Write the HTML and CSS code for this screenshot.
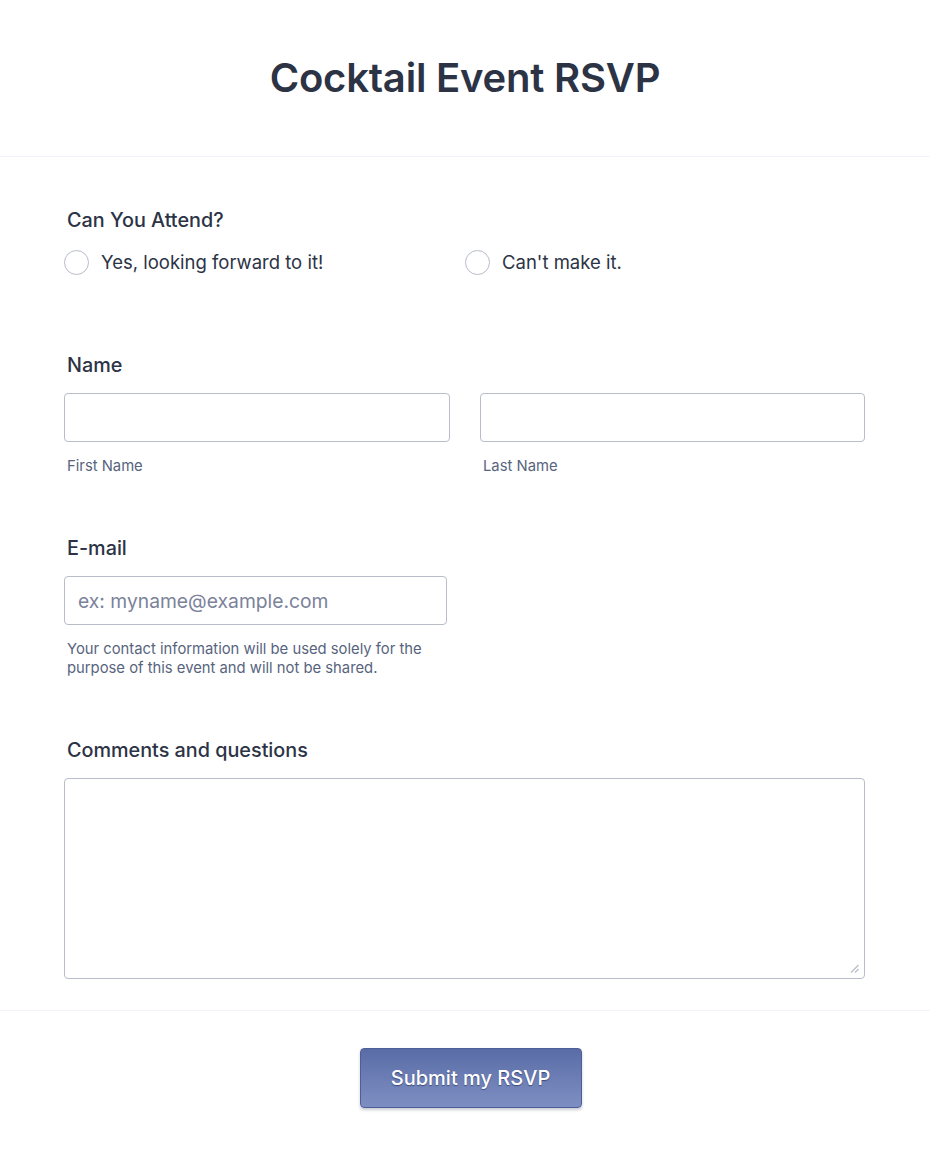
FILE: index.html
```html
<!DOCTYPE html>
<html lang="en">
<head>
<meta charset="utf-8">
<title>Cocktail Event RSVP</title>
<link rel="stylesheet" href="styles.css">
</head>
<body>
<form class="card">
  <header class="card-header">
    <h1 class="title">Cocktail Event RSVP</h1>
  </header>

  <div class="fields">
    <fieldset class="field field-attend">
      <legend class="label">Can You Attend?</legend>
      <div class="radio-row">
        <label class="radio"><input type="radio" name="attend" class="radio-input"><span class="radio-text">Yes, looking forward to it!</span></label>
        <label class="radio"><input type="radio" name="attend" class="radio-input"><span class="radio-text">Can't make it.</span></label>
      </div>
    </fieldset>

    <div class="field field-name">
      <div class="label">Name</div>
      <div class="name-row">
        <label class="name-part">
          <input type="text" class="text-input">
          <span class="sublabel">First Name</span>
        </label>
        <label class="name-part">
          <input type="text" class="text-input">
          <span class="sublabel">Last Name</span>
        </label>
      </div>
    </div>

    <div class="field field-email">
      <label class="label" for="email">E-mail</label>
      <input id="email" type="email" class="text-input email-input" placeholder="ex: myname@example.com">
      <p class="hint">Your contact information will be used solely for the purpose of this event and will not be shared.</p>
    </div>

    <div class="field field-comments">
      <label class="label" for="comments">Comments and questions</label>
      <div class="textarea-wrap">
        <textarea id="comments" class="textarea"></textarea>
        <svg class="grip" width="9" height="9" viewBox="0 0 9 9" aria-hidden="true">
          <path d="M8.5 1 L1 8.5 M8.5 5 L5 8.5" stroke="#b9bdc8" stroke-width="1.2" fill="none"/>
        </svg>
      </div>
    </div>
  </div>

  <footer class="card-footer">
    <button type="button" class="submit">Submit my RSVP</button>
  </footer>
</form>
</body>
</html>
```

FILE: styles.css
```css
* { box-sizing: border-box; }

html, body {
  margin: 0;
  padding: 0;
  background: #ffffff;
}

body {
  font-family: Inter, "Noto Sans", "Liberation Sans", sans-serif;
  color: #2c3345;
}

.card {
  width: 930px;
  min-height: 1156px;
  background: #ffffff;
}

.card-header {
  height: 157px;
  border-bottom: 1px solid #f3f3fe;
  display: flex;
  align-items: center;
  justify-content: center;
  padding-bottom: 2px;
}

.title {
  margin: 0;
  font-size: 40px;
  font-weight: 600;
  letter-spacing: -0.2px;
  color: #2c3345;
}

.fields {
  padding: 0 65px 31px 64px;
  border-bottom: 1px solid #f3f3fe;
}

.field {
  margin: 0;
  padding: 0;
  border: 0;
  min-width: 0;
}

.label {
  display: block;
  font-size: 19.8px;
  font-weight: 500;
  line-height: 24px;
  padding: 0 0 0 3px;
  color: #2c3345;
}

/* attendance radios */
.field-attend { padding-top: 51px; }
.field-attend .label { float: left; width: 100%; margin-bottom: 17px; }
.radio-row {
  clear: both;
  display: grid;
  grid-template-columns: 401px 1fr;
}
.radio {
  display: flex;
  align-items: center;
  gap: 12px;
  height: 26px;
  font-size: 18.5px;
  color: #2c3345;
}
.radio-input {
  appearance: none;
  -webkit-appearance: none;
  margin: 0;
  width: 25px;
  height: 25px;
  border: 1px solid #b8bdc9;
  border-radius: 50%;
  background: #fff;
}

/* name */
.field-name { padding-top: 78px; }
.field-name .label { margin-bottom: 16px; }
.name-row {
  display: grid;
  grid-template-columns: 386px 385px;
  column-gap: 30px;
}
.name-part { display: flex; flex-direction: column; }
.sublabel {
  margin-top: 15px;
  padding-left: 3px;
  font-size: 14.8px;
  line-height: 18px;
  color: #57647e;
}

.text-input {
  display: block;
  width: 100%;
  height: 49px;
  margin: 0;
  padding: 0 13px;
  border: 1px solid #b8bdc9;
  border-radius: 4px;
  background: #fff;
  font-family: inherit;
  font-size: 19.3px;
  color: #2c3345;
}
.text-input::placeholder { color: #7b829a; }

/* email */
.field-email { padding-top: 61px; }
.field-email .label { margin-bottom: 16px; }
.email-input { width: 383px; }
.hint {
  margin: 15px 0 0;
  padding-left: 3px;
  width: 390px;
  font-size: 14.8px;
  line-height: 19px;
  color: #57647e;
}

/* comments */
.field-comments { padding-top: 60px; }
.field-comments .label { margin-bottom: 16px; }
.textarea-wrap { position: relative; width: 801px; }
.textarea {
  display: block;
  width: 801px;
  height: 201px;
  margin: 0;
  padding: 10px 13px;
  border: 1px solid #b8bdc9;
  border-radius: 4px;
  font-family: inherit;
  font-size: 19px;
  resize: none;
}
.grip {
  position: absolute;
  right: 6px;
  bottom: 6px;
}

/* footer */
.card-footer {
  display: flex;
  justify-content: center;
  padding: 37px 0 0 11px;
}
.submit {
  width: 222px;
  height: 60px;
  border: 1px solid #4f5f96;
  border-radius: 4px;
  background: linear-gradient(180deg, #5a6ca6 0%, #7d8fc2 100%);
  box-shadow: 0 2px 3px rgba(43, 51, 82, 0.25);
  color: #ffffff;
  font-family: inherit;
  font-size: 20px;
  font-weight: 500;
  text-shadow: 0 1px 1px rgba(30, 40, 80, 0.6);
  cursor: pointer;
}
```
